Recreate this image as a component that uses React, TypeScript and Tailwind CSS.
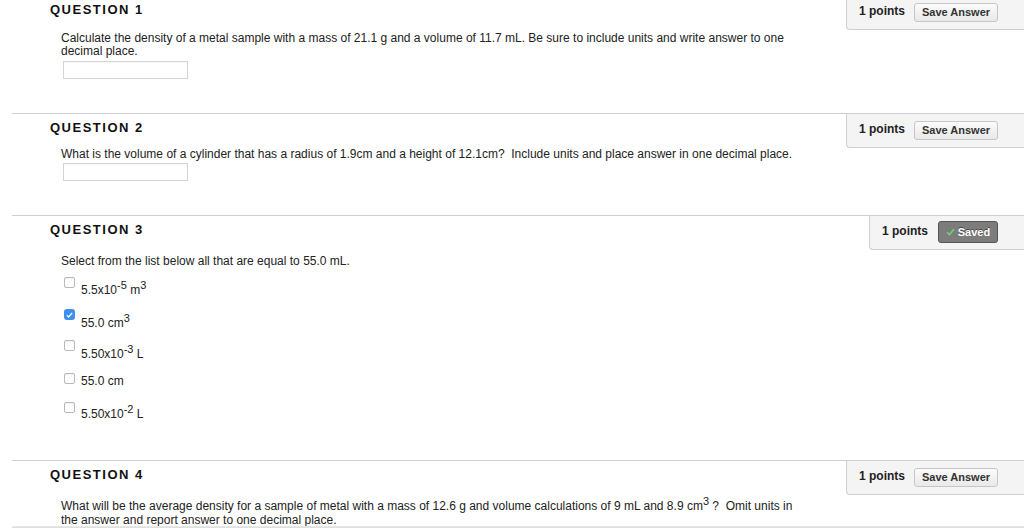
import type { ReactNode } from "react";

const FONT = { fontFamily: '"Liberation Sans", Arial, Helvetica, sans-serif' };

function PointsBox({ saved = false }: { saved?: boolean }) {
  return (
    <div
      className={`flex h-[34px] items-start rounded-bl-[4px] border-b border-l border-[#cfcfcf] bg-[#f4f4f4] pr-[26px] pl-[12px] ${
        saved ? "w-[155px]" : "w-[178px]"
      }`}
    >
      <span className="mt-[8px] text-[12px] leading-[14px] font-bold text-[#222]">1 points</span>
      {saved ? (
        <button
          type="button"
          className="mt-[5px] ml-auto flex h-[22px] w-[60px] items-center justify-center gap-[3px] rounded-[3px] border border-[#555] bg-[#7c7c7c] text-[11px] font-bold text-white"
        >
          <svg width="9" height="8" viewBox="0 0 9 8" aria-hidden="true">
            <path d="M1 4.2 L3.4 6.6 L8 1.2" fill="none" stroke="#6fd36f" strokeWidth="1.6" />
          </svg>
          <span className="[text-shadow:0_-1px_0_#444]">Saved</span>
        </button>
      ) : (
        <button
          type="button"
          className="mt-[7px] ml-auto h-[19px] w-[84px] rounded-[3px] border border-[#c6c6c6] bg-gradient-to-b from-[#fbfbfb] to-[#e9e9e9] text-[11px] leading-[17px] font-bold text-[#333]"
        >
          Save Answer
        </button>
      )}
    </div>
  );
}

function Section({
  num,
  saved,
  children,
}: {
  num: number;
  saved?: boolean;
  children: ReactNode;
}) {
  return (
    <section className="border-t border-[#cfcfcf]">
      <div className="flex items-start justify-between">
        <h2 className="mt-[6px] ml-[38px] text-[13px] leading-[16px] font-bold tracking-[1.5px] text-[#111]">
          QUESTION {num}
        </h2>
        <PointsBox saved={saved} />
      </div>
      {children}
    </section>
  );
}

function AnswerInput({ mt }: { mt: string }) {
  return (
    <div
      className={`${mt} ml-[2px] h-[18px] w-[125px] border border-[#d4d4d4] bg-white shadow-[inset_0_1px_1px_rgba(0,0,0,0.04)]`}
    />
  );
}

function Check({ checked = false }: { checked?: boolean }) {
  return checked ? (
    <div className="flex h-[11px] w-[11px] shrink-0 items-center justify-center rounded-[3px] bg-[#3d8ff0]">
      <svg width="7" height="6" viewBox="0 0 7 6" aria-hidden="true">
        <path d="M0.8 3.2 L2.6 5 L6.2 0.9" fill="none" stroke="white" strokeWidth="1.2" />
      </svg>
    </div>
  ) : (
    <div className="h-[11px] w-[11px] shrink-0 rounded-[2px] border border-[#b9b9b9] bg-white shadow-[inset_0_1px_1px_rgba(0,0,0,0.06)]" />
  );
}

const sup = "text-[11px]";

const options: { label: ReactNode; checked?: boolean; h: string; mt: string }[] = [
  { label: <>5.5x10<sup className={sup}>-5</sup> m<sup className={sup}>3</sup></>, h: "h-[32px]", mt: "mt-[8px]" },
  { label: <>55.0 cm<sup className={sup}>3</sup></>, checked: true, h: "h-[31px]", mt: "mt-[9px]" },
  { label: <>5.50x10<sup className={sup}>-3</sup> L</>, h: "h-[33px]", mt: "mt-[9px]" },
  { label: <>55.0 cm</>, h: "h-[29px]", mt: "mt-[3px]" },
  { label: <>5.50x10<sup className={sup}>-2</sup> L</>, h: "h-[29px]", mt: "mt-[7px]" },
];

export default function App() {
  return (
    <div style={FONT} className="relative h-[528px] w-[1024px] overflow-hidden bg-white text-[12px] text-[#222]">
      <div className="-mt-[5px] ml-[12px]">
        <Section num={1}>
          <div className="mt-[2px] ml-[49px] w-[745px] pb-[34px]">
            <p className="leading-[13px]">
              Calculate the density of a metal sample with a mass of 21.1 g and a volume of 11.7 mL. Be sure to include
              units and write answer to one decimal place.
            </p>
            <AnswerInput mt="mt-[3px]" />
          </div>
        </Section>

        <Section num={2}>
          <div className="ml-[49px] w-[745px] pb-[34px]">
            <p className="leading-[13px]">
              What is the volume of a cylinder that has a radius of 1.9cm and a height of 12.1cm?{"\u00a0 "}Include units
              and place answer in one decimal place.
            </p>
            <AnswerInput mt="mt-[2px]" />
          </div>
        </Section>

        <Section num={3} saved>
          <div className="mt-[5px] ml-[49px] pb-[29px]">
            <p className="leading-[13px]">Select from the list below all that are equal to 55.0 mL.</p>
            <div className="mt-[9px] ml-[3px]">
              {options.map((o, i) => (
                <div key={i} className={`flex items-start gap-[6px] ${o.h}`}>
                  <Check checked={o.checked} />
                  <span className={`leading-[11px] ${o.mt}`}>{o.label}</span>
                </div>
              ))}
            </div>
          </div>
        </Section>

        <Section num={4}>
          <div className="mt-[4px] ml-[49px] w-[745px] pb-[20px]">
            <p className="leading-[14px]">
              What will be the average density for a sample of metal with a mass of 12.6 g and volume calculations of 9
              mL and 8.9 cm<sup className={sup}>3</sup> ?{"\u00a0 "}Omit units in the answer and report answer to one
              decimal place.
            </p>
          </div>
        </Section>
      </div>
      <div className="absolute right-0 bottom-0 left-[12px] h-[2px] bg-gradient-to-b from-[#ececec] to-[#dcdcdc]" />
    </div>
  );
}
